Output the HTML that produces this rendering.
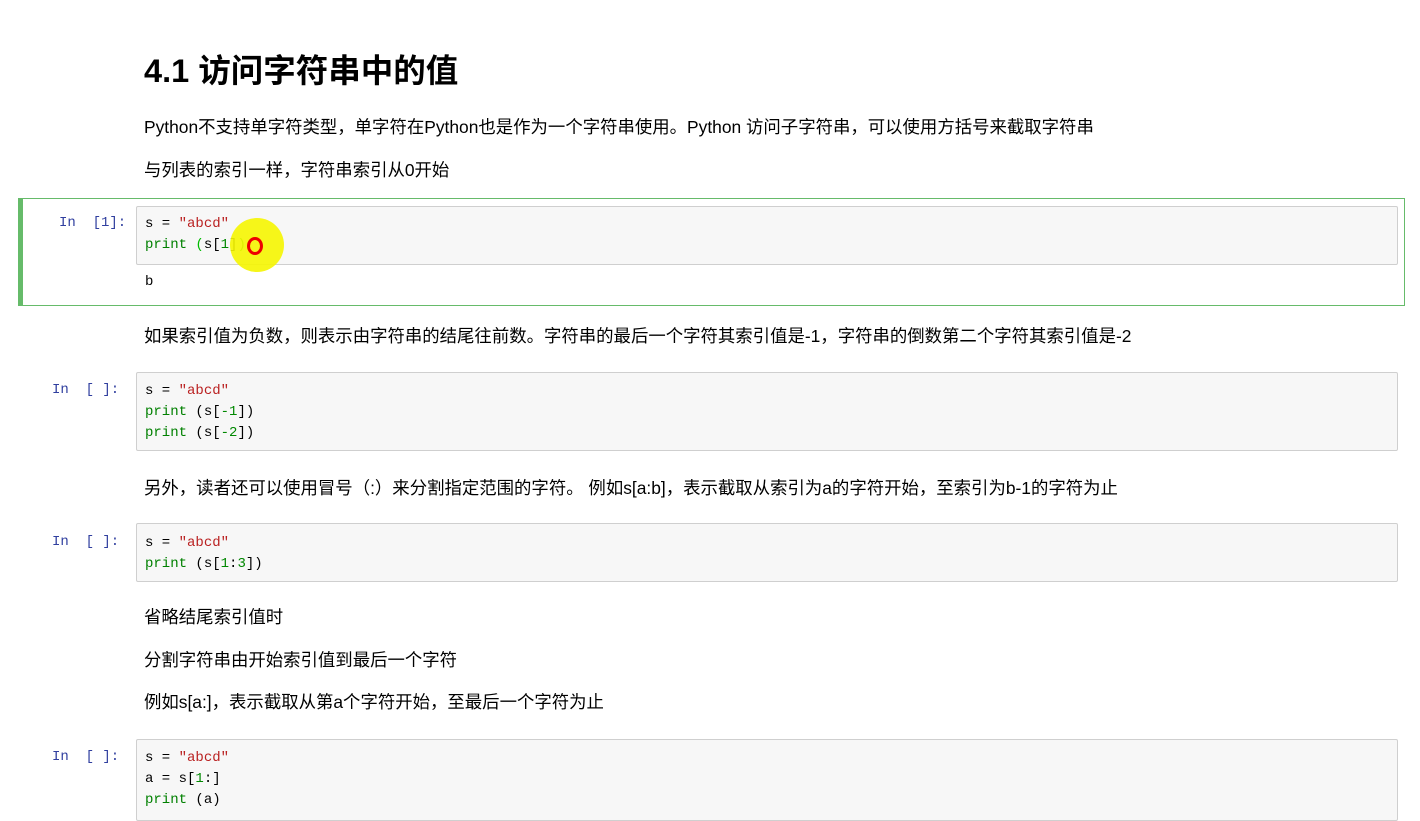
<!DOCTYPE html>
<html><head><meta charset="utf-8"><style>
body{margin:0;width:1420px;height:800px;background:#fff;overflow:hidden;position:relative;font-family:"Liberation Sans","Noto Sans CJK SC",sans-serif;color:#000}
.a{position:absolute}
p.a{margin:0;font-size:17.4px;left:144px;white-space:nowrap;letter-spacing:0}
.box{position:absolute;left:136px;width:1260px;background:#f7f7f7;border:1px solid #cfcfcf;border-radius:2px}
.code{position:absolute;left:145px;font-family:"Liberation Mono",monospace;font-size:14px;line-height:21px;white-space:pre;color:#000}
.pr{position:absolute;font-family:"Liberation Mono",monospace;font-size:14px;color:#303f9f;white-space:pre}
.s{color:#ba2121}.k{color:#008000}.n{color:#080}.p{color:#0b0}
</style></head><body>
<div class="a" style="left:144px;top:45px;font-size:32.5px;font-weight:bold">4.1 访问字符串中的值</div>
<p class="a" style="top:114px">Python不支持单字符类型，单字符在Python也是作为一个字符串使用。Python 访问子字符串，可以使用方括号来截取字符串</p>
<p class="a" style="top:157px">与列表的索引一样，字符串索引从0开始</p>

<div class="a" style="left:18px;top:198px;width:1387px;height:108px;border:1px solid #66bb6a;box-sizing:border-box"></div>
<div class="a" style="left:18px;top:198px;width:5px;height:108px;background:#66bb6a"></div>
<div class="box" style="top:206px;height:57px"></div>
<div class="pr" style="left:59px;top:215px">In  [1]:</div>
<div class="code" style="top:214px">s = <span class="s">"abcd"</span>
<span class="k">print</span> <span class="p">(</span>s[<span class="n">1</span>]<span class="p">)</span></div>
<div class="a" style="left:230px;top:218px;width:54px;height:54px;border-radius:50%;background:#f5f500;opacity:.9"></div>
<div class="a" style="left:247px;top:237px;width:10px;height:12px;border:3px solid #e00;border-radius:50%"></div>
<div class="code" style="top:272px">b</div>

<p class="a" style="top:323px">如果索引值为负数，则表示由字符串的结尾往前数。字符串的最后一个字符其索引值是-1，字符串的倒数第二个字符其索引值是-2</p>
<div class="box" style="top:372px;height:77px"></div>
<div class="pr" style="left:52px;top:382px">In  [ ]:</div>
<div class="code" style="top:381px">s = <span class="s">"abcd"</span>
<span class="k">print</span> (s[<span class="n">-1</span>])
<span class="k">print</span> (s[<span class="n">-2</span>])</div>

<p class="a" style="top:475px">另外，读者还可以使用冒号（:）来分割指定范围的字符。 例如s[a:b]，表示截取从索引为a的字符开始，至索引为b-1的字符为止</p>
<div class="box" style="top:523px;height:57px"></div>
<div class="pr" style="left:52px;top:534px">In  [ ]:</div>
<div class="code" style="top:533px">s = <span class="s">"abcd"</span>
<span class="k">print</span> (s[<span class="n">1</span>:<span class="n">3</span>])</div>

<p class="a" style="top:604px">省略结尾索引值时</p>
<p class="a" style="top:647px">分割字符串由开始索引值到最后一个字符</p>
<p class="a" style="top:689px">例如s[a:]，表示截取从第a个字符开始，至最后一个字符为止</p>
<div class="box" style="top:739px;height:80px"></div>
<div class="pr" style="left:52px;top:749px">In  [ ]:</div>
<div class="code" style="top:748px">s = <span class="s">"abcd"</span>
a = s[<span class="n">1</span>:]
<span class="k">print</span> (a)</div>
</body></html>
